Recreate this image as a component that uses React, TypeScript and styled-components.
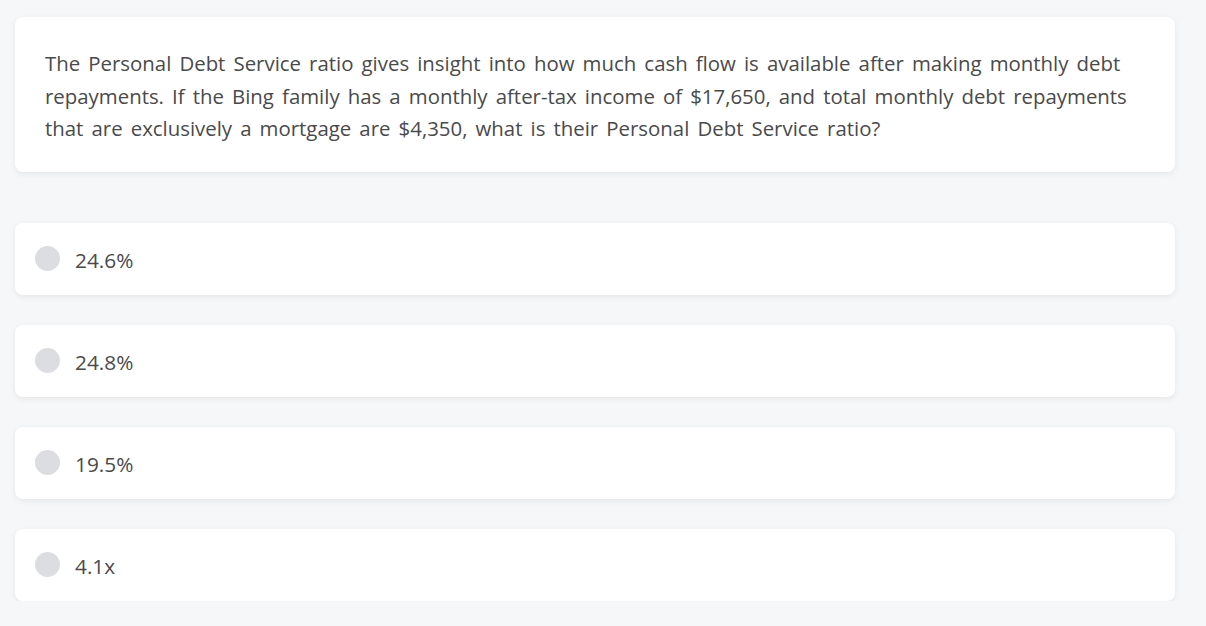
import React from "react";
import styled, { createGlobalStyle } from "styled-components";

const GlobalStyle = createGlobalStyle`
  html, body {
    margin: 0;
    background: #f6f7f9;
    font-family: "Open Sans", "Noto Sans", sans-serif;
  }
`;

const Page = styled.div`
  display: flex;
  flex-direction: column;
  width: 1160px;
  padding: 17px 0 0 15px;
`;

const Card = styled.div`
  background: #ffffff;
  border-radius: 8px;
  box-shadow: 0 2px 6px rgba(0, 0, 0, 0.07);
`;

const QuestionCard = styled(Card)`
  padding: 30px 30px 27px;
  margin-bottom: 51px;
`;

const QuestionText = styled.p`
  margin: 0;
  font-size: 20.4px;
  word-spacing: 2.8px;
  line-height: 32.5px;
  color: #4a4a4a;
`;

const Options = styled.div`
  display: flex;
  flex-direction: column;
  gap: 30px;
`;

const OptionCard = styled(Card)`
  height: 72px;
  display: flex;
  align-items: center;
  padding: 0 20px;
  gap: 15px;
  cursor: pointer;
`;

const Radio = styled.span`
  width: 25px;
  height: 25px;
  border-radius: 50%;
  background: #dcdde0;
  flex-shrink: 0;
`;

const OptionLabel = styled.span`
  font-size: 20.8px;
  color: #4a4a4a;
  padding-top: 2px;
`;

const options = ["24.6%", "24.8%", "19.5%", "4.1x"];

const App: React.FC = () => {
  return (
    <>
      <GlobalStyle />
      <Page>
        <QuestionCard>
          <QuestionText>
            The Personal Debt Service ratio gives insight into how much cash flow is available after making monthly debt
            repayments. If the Bing family has a monthly after-tax income of $17,650, and total monthly debt repayments
            that are exclusively a mortgage are $4,350, what is their Personal Debt Service ratio?
          </QuestionText>
        </QuestionCard>
        <Options>
          {options.map((o) => (
            <OptionCard key={o}>
              <Radio />
              <OptionLabel>{o}</OptionLabel>
            </OptionCard>
          ))}
        </Options>
      </Page>
    </>
  );
};

export default App;
